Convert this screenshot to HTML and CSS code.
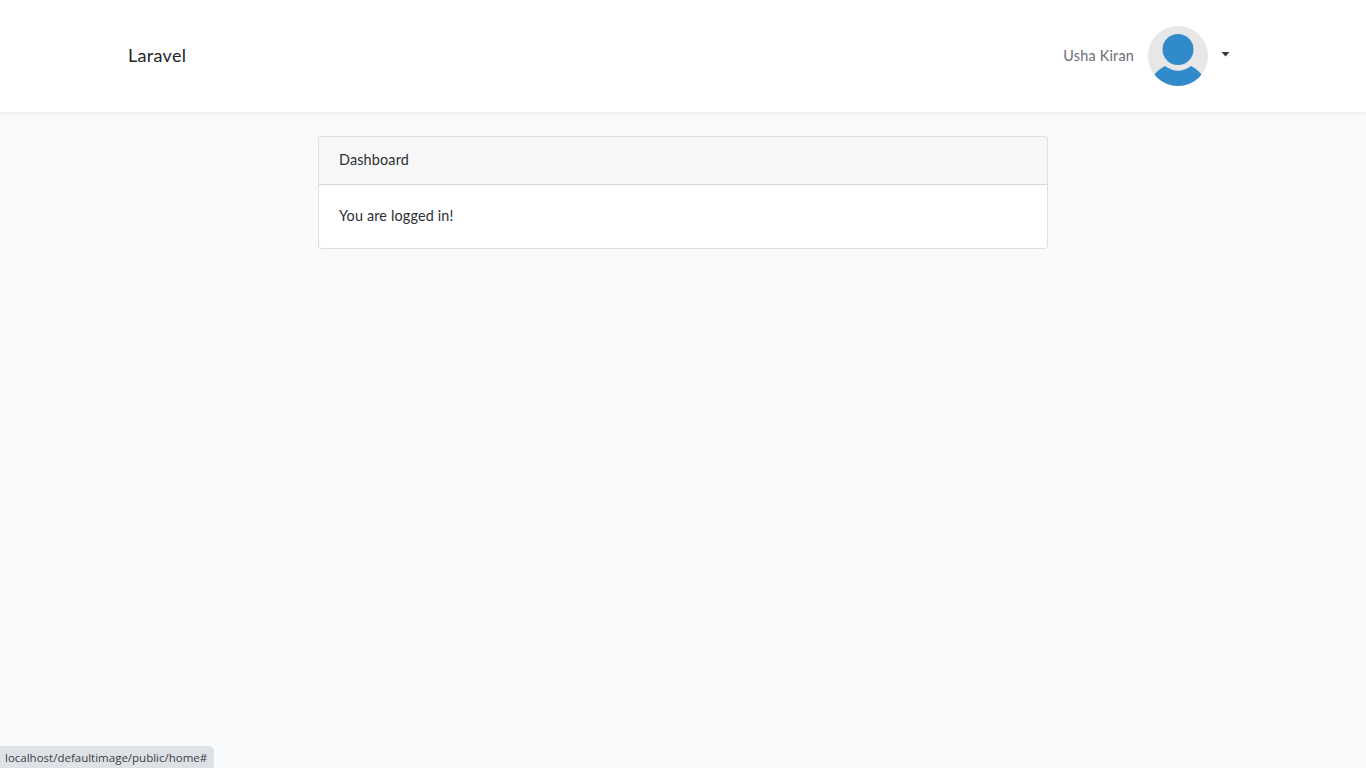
FILE: index.html
```html
<!DOCTYPE html>
<html lang="en">
<head>
<meta charset="utf-8">
<title>Laravel</title>
<link rel="stylesheet" href="styles.css">
</head>
<body>
<nav class="navbar">
  <div class="container nav-inner">
    <a class="brand" href="#">Laravel</a>
    <div class="user">
      <a class="user-name" href="#">Usha Kiran</a>
      <svg class="avatar" width="60" height="60" viewBox="0 0 60 60" aria-hidden="true">
        <defs><clipPath id="avatar-clip"><circle cx="30" cy="30" r="30"/></clipPath></defs>
        <circle cx="30" cy="30" r="30" fill="#e7e7e8"/>
        <g clip-path="url(#avatar-clip)" fill="#318aca">
          <circle cx="30" cy="23.5" r="15.5"/>
          <path d="M4 60 V52 Q9 44 17 40 Q30 49.4 43 40 Q51 44 56 52 V60 Z"/>
        </g>
      </svg>
      <span class="caret"></span>
    </div>
  </div>
</nav>
<main class="main">
  <section class="card">
    <header class="card-header">Dashboard</header>
    <div class="card-body">You are logged in!</div>
  </section>
</main>
<div class="status">localhost/defaultimage/public/home#</div>
</body>
</html>
```
FILE: styles.css
```css
* { box-sizing: border-box; }
html, body { height: 100%; }
body {
  margin: 0;
  background: #f8fafc;
  color: #2b3035;
  font-family: "Lato", "Open Sans", sans-serif;
  font-size: 14.4px;
  line-height: 1.6;
  letter-spacing: .16px;
  overflow: hidden;
}
a { text-decoration: none; color: inherit; }
.navbar {
  height: 112px;
  background: #fff;
  box-shadow: 0 2px 4px rgba(0, 0, 0, .06);
}
.container {
  width: 1140px;
  margin: 0 auto;
  padding: 0 15px;
}
.nav-inner {
  height: 100%;
  display: flex;
  align-items: center;
  justify-content: space-between;
}
.brand { font-size: 18px; color: #212529; letter-spacing: .3px; margin-top: -2px; }
.user { display: flex; align-items: center; padding-right: 8px; }
.user-name { color: #6c6c75; margin-right: 14px; letter-spacing: .2px; }
.avatar { display: block; flex: none; }
.caret {
  width: 9px;
  height: 5px;
  flex: none;
  margin: -4px 0 0 13px;
  background: #343a40;
  clip-path: polygon(0 0, 100% 0, 50% 100%);
}
.main { padding-top: 24px; display: flex; justify-content: center; }
.card {
  width: 730px;
  background: #fff;
  border: 1px solid rgba(0, 0, 0, .125);
  border-radius: 4px;
  overflow: hidden;
}
.card-header {
  height: 48px;
  padding: 12px 20px;
  background: #f7f7f7;
  border-bottom: 1px solid rgba(0, 0, 0, .125);
  line-height: 21px;
}
.card-body { padding: 20px; height: 63px; line-height: 21px; }
.status {
  position: absolute;
  left: 0;
  bottom: 0;
  height: 22px;
  padding: 0 7px 0 5px;
  background: #dee1e6;
  border-top-right-radius: 5px;
  color: #3c4043;
  font-family: "Open Sans", "Noto Sans", sans-serif;
  font-size: 11.5px;
  letter-spacing: 0;
  line-height: 23px;
}
```
